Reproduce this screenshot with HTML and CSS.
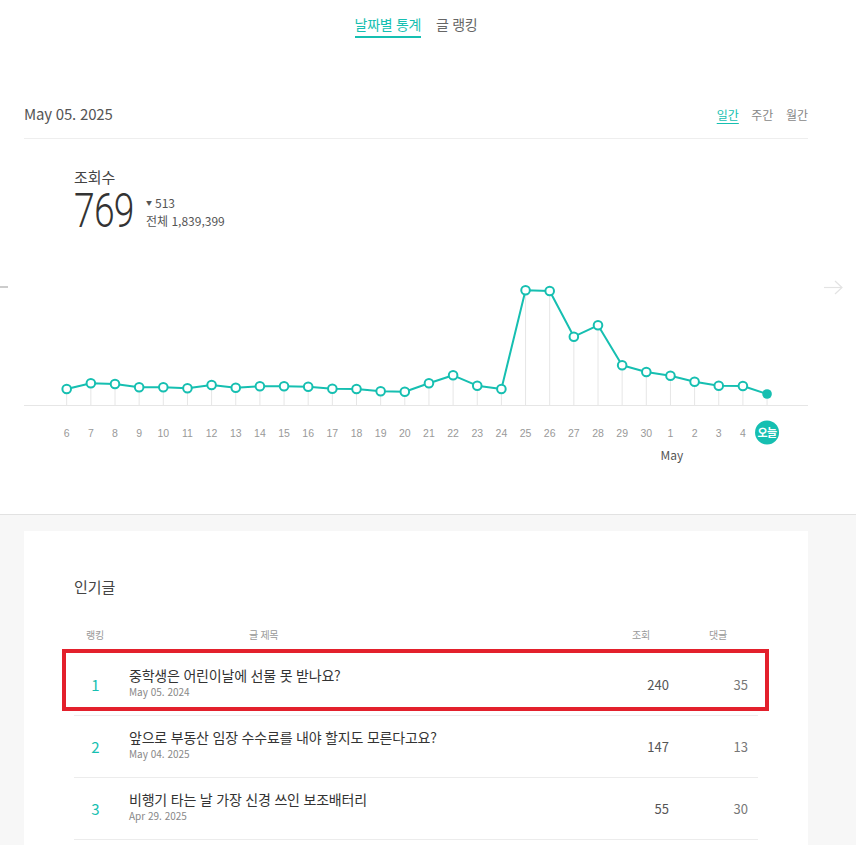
FILE: index.html
```html
<!DOCTYPE html>
<html lang="ko">
<head>
<meta charset="utf-8">
<title>통계</title>
<link rel="stylesheet" href="styles.css">
</head>
<body>
<nav class="top-tabs">
  <a class="top-tab active">날짜별 통계</a>
  <a class="top-tab">글 랭킹</a>
</nav>

<section class="stats">
  <header class="date-head">
    <span class="date">May 05. 2025</span>
    <div class="period">
      <a class="period-tab active">일간</a>
      <a class="period-tab">주간</a>
      <a class="period-tab">월간</a>
    </div>
  </header>

  <div class="summary">
    <div class="summary-label">조회수</div>
    <div class="summary-row">
      <span class="big-num">769</span>
      <div class="summary-side">
        <div class="delta"><span class="tri">▼</span>513</div>
        <div class="total">전체 1,839,399</div>
      </div>
    </div>
  </div>

  <div class="chart">
    <svg class="chart-svg" width="856" height="244" viewBox="0 0 856 244" id="chart">
      <line x1="0" y1="17" x2="8" y2="17" stroke="#999" stroke-width="1"/>
      <g stroke="#e3e3e3" stroke-width="1.2" fill="none">
        <line x1="824" y1="17.5" x2="842" y2="17.5"/>
        <polyline points="835,11 842,17.5 835,24"/>
      </g>
    </svg>
  </div>
</section>

<section class="popular-wrap">
  <div class="card">
    <h2 class="card-title">인기글</h2>
    <div class="table">
      <div class="thead">
        <span class="th th-rank">랭킹</span>
        <span class="th th-title">글 제목</span>
        <span class="th th-views">조회</span>
        <span class="th th-comments">댓글</span>
      </div>
      <div class="trow highlighted">
        <span class="rank">1</span>
        <div class="title-cell">
          <div class="post-title">중학생은 어린이날에 선물 못 받나요?</div>
          <div class="post-date">May 05. 2024</div>
        </div>
        <span class="num views">240</span>
        <span class="num comments">35</span>
      </div>
      <div class="trow">
        <span class="rank">2</span>
        <div class="title-cell">
          <div class="post-title">앞으로 부동산 임장 수수료를 내야 할지도 모른다고요?</div>
          <div class="post-date">May 04. 2025</div>
        </div>
        <span class="num views">147</span>
        <span class="num comments">13</span>
      </div>
      <div class="trow">
        <span class="rank">3</span>
        <div class="title-cell">
          <div class="post-title">비행기 타는 날 가장 신경 쓰인 보조배터리</div>
          <div class="post-date">Apr 29. 2025</div>
        </div>
        <span class="num views">55</span>
        <span class="num comments">30</span>
      </div>
    </div>
  </div>
</section>

<script src="chart.js"></script>
</body>
</html>
```

FILE: chart.js
```js
(function () {
  var svg = document.getElementById('chart');
  var NS = 'http://www.w3.org/2000/svg';
  var top = 270;
  var labels = ['6','7','8','9','10','11','12','13','14','15','16','17','18','19','20','21','22','23','24','25','26','27','28','29','30','1','2','3','4'];
  var ys = [389,383.3,384,387.3,387.3,388.3,385,387.7,386.3,386.3,386.7,388.7,389,391.3,391.7,383.3,375.3,385.7,389,290.3,291,336.7,325.3,365.3,372,375.7,381.7,385.7,386,394];
  var base = 405.5 - top;
  function el(name, attrs, parent) {
    var e = document.createElementNS(NS, name);
    for (var k in attrs) e.setAttribute(k, attrs[k]);
    (parent || svg).appendChild(e);
    return e;
  }
  var gGrid = el('g', {stroke: '#e6e6e6', 'stroke-width': '1'});
  el('line', {x1: 24, y1: base, x2: 808, y2: base, stroke: '#e6e6e6', 'stroke-width': 1});
  var pts = [];
  for (var i = 0; i < ys.length; i++) {
    var x = 66.7 + i * 24.15;
    var y = ys[i] - top;
    pts.push(x.toFixed(1) + ',' + y.toFixed(1));
    el('line', {x1: x, y1: y, x2: x, y2: base}, gGrid);
  }
  el('polyline', {points: pts.join(' '), fill: 'none', stroke: '#16bfb1', 'stroke-width': 2, 'stroke-linejoin': 'round'});
  for (var j = 0; j < ys.length; j++) {
    var cx = 66.7 + j * 24.15;
    var cy = ys[j] - top;
    if (j === ys.length - 1) {
      el('circle', {cx: cx, cy: cy, r: 4.8, fill: '#16bfb1'});
    } else {
      el('circle', {cx: cx, cy: cy, r: 4.3, fill: '#fff', stroke: '#16bfb1', 'stroke-width': 2});
    }
  }
  var gLab = el('g', {'class': 'axis-label'});
  for (var k = 0; k < labels.length; k++) {
    var t = el('text', {x: 66.7 + k * 24.15, y: 166.5, 'text-anchor': 'middle'}, gLab);
    t.textContent = labels[k];
  }
  var tx = 66.7 + 29 * 24.15;
  el('circle', {cx: tx, cy: 162.5, r: 12, fill: '#16bfb1'});
  var today = el('text', {x: tx, y: 166.5, 'text-anchor': 'middle', 'class': 'today-label'});
  today.textContent = '오늘';
  var may = el('text', {x: 672, y: 190, 'text-anchor': 'middle', 'class': 'month-label'});
  may.textContent = 'May';
})();
```

FILE: styles.css
```css
* { box-sizing: border-box; }
html, body { margin: 0; padding: 0; }
body {
  width: 856px;
  background: #fff;
  font-family: "Noto Sans CJK KR", "Noto Sans", sans-serif;
  color: #333;
  overflow: hidden;
}
a { text-decoration: none; cursor: pointer; }

.top-tabs {
  display: flex;
  justify-content: center;
  gap: 15px;
  padding-top: 14px;
  padding-right: 24px;
  height: 39px;
}
.top-tab {
  font-size: 14px;
  line-height: 20px;
  color: #666;
  padding-bottom: 2px;
  border-bottom: 2px solid transparent;
  height: 24px;
  letter-spacing: -0.3px;
}
.top-tab.active { color: #16bfb1; border-bottom-color: #16bfb1; }

.stats { padding: 0; }
.date-head {
  margin: 65px 48px 0 24px;
  display: flex;
  justify-content: space-between;
  align-items: center;
  padding-bottom: 14px;
  border-bottom: 1px solid #eee;
  height: 35px;
}
.date {
  font-size: 15px;
  line-height: 20px;
  color: #555;
  letter-spacing: -0.2px;
}
.period { display: flex; gap: 12.5px; padding-top: 2px; }
.period-tab { font-size: 12px; line-height: 16px; color: #888; }
.period-tab.active { color: #16bfb1; text-decoration: underline; text-underline-offset: 3px; }

.summary { padding: 28px 0 0 74px; height: 131px; }
.summary-label { font-size: 15px; line-height: 20px; color: #444; }
.summary-row { display: flex; align-items: flex-start; margin-top: 6px; }
.big-num {
  font-family: Roboto, "Liberation Sans", sans-serif;
  font-weight: 300;
  font-size: 49px;
  line-height: 36px;
  height: 36px;
  color: #333;
  display: inline-block;
  width: 72px;
  transform: scaleX(0.76);
  transform-origin: left center;
  letter-spacing: -1px;
}
.summary-side { padding-top: 2px; }
.delta { font-size: 12px; line-height: 16px; color: #555; }
.tri { font-size: 6px; vertical-align: 3px; margin-right: 3px; color: #555; }
.total { font-size: 12px; line-height: 18px; color: #555; margin-top: 1px; }

.chart { height: 244px; }
.chart-svg { display: block; }
.axis-label text {
  font-family: "Liberation Sans", Arial, sans-serif;
  font-size: 10.5px;
  fill: #999;
}
.today-label {
  font-family: "Noto Sans CJK KR", sans-serif;
  font-size: 11px;
  font-weight: 700;
  fill: #fff;
  letter-spacing: -0.5px;
}
.month-label {
  font-family: "Noto Sans CJK KR", sans-serif;
  font-size: 12px;
  fill: #555;
}

.popular-wrap {
  border-top: 1px solid #e2e2e2;
  background: #f7f7f7;
  padding: 16px 48px 0 24px;
  height: 340px;
}
.card {
  background: #fff;
  padding: 46px 50px 0 50px;
  height: 330px;
}
.card-title {
  margin: 0;
  font-size: 15px;
  line-height: 20px;
  font-weight: 400;
  color: #444;
}
.table { margin-top: 17px; }
.thead, .trow {
  display: grid;
  grid-template-columns: 42px 1fr 90px 80px;
  align-items: center;
}
.thead { height: 40px; }
.th { font-size: 10px; color: #999; letter-spacing: -0.3px; }
.th-rank { text-align: center; }
.th-title { padding-left: 133px; }
.th-views { padding-left: 44px; }
.th-comments { text-align: center; }

.trow {
  position: relative;
  height: 62px;
  border-bottom: 1px solid #ececec;
}
.rank {
  text-align: center;
  font-size: 15px;
  color: #16bfb1;
  padding-left: 1px;
}
.title-cell { padding-left: 13px; padding-bottom: 5px; }
.post-title { font-size: 14px; line-height: 18px; color: #333; letter-spacing: -0.2px; }
.post-date { font-size: 10px; line-height: 14px; color: #888; margin-top: 1px; }
.num { text-align: right; font-size: 13px; color: #555; }
.views { padding-right: 9px; }
.comments { padding-right: 10px; color: #777; }

.highlighted::after {
  content: "";
  position: absolute;
  left: -12px;
  right: -11px;
  top: -5px;
  bottom: 4px;
  border: 4px solid #e3202c;
  pointer-events: none;
}
```
